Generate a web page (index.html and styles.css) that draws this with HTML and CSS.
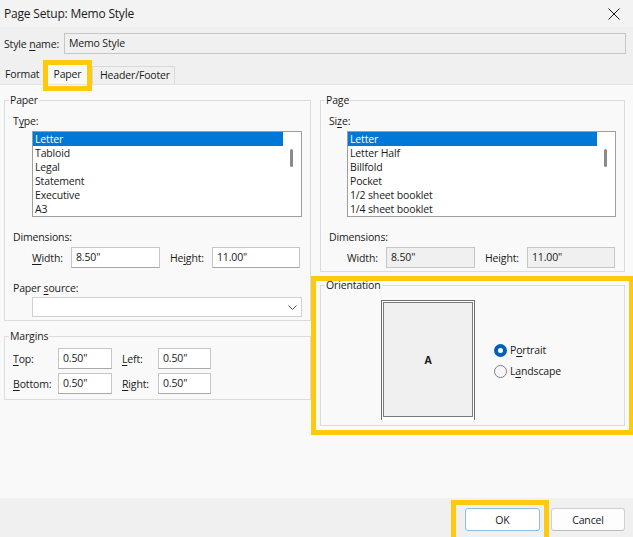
FILE: index.html
```html
<!DOCTYPE html>
<html lang="en">
<head>
    <meta charset="UTF-8">
    <title>Page Setup: Memo Style</title>
    <link rel="stylesheet" href="styles.css">
</head>
<body>

    <div class="titlebar">
        <span class="title">Page Setup: Memo Style</span>
        <svg class="close" width="12" height="12" viewBox="0 0 12 12">
            <path d="M0.5 0.5 L11.5 11.5 M11.5 0.5 L0.5 11.5" stroke="#1a1a1a" stroke-width="1" fill="none"/>
        </svg>
    </div>

    <div class="style-row">
        <label>Style <u>n</u>ame:</label>
        <div class="textbox readonly wide">Memo Style</div>
    </div>

    <div class="tabs">
        <div class="tab plain">Format</div>
        <div class="tab selected">Paper</div>
        <div class="tab framed">Header/Footer</div>
    </div>

    <div class="panel">
        <div class="column">
            <fieldset class="group">
                <legend>Paper</legend>
                <div class="field-label first">T<u>y</u>pe:</div>
                <div class="listbox">
                    <div class="item active">Letter</div>
                    <div class="item">Tabloid</div>
                    <div class="item">Legal</div>
                    <div class="item">Statement</div>
                    <div class="item">Executive</div>
                    <div class="item">A3</div>
                    <div class="thumb"></div>
                </div>
                <div class="field-label">Dimensions:</div>
                <div class="dims">
                    <label class="lbl-w"><u>W</u>idth:</label>
                    <div class="textbox w89">8.50"</div>
                    <label class="lbl-h">He<u>i</u>ght:</label>
                    <div class="textbox w88">11.00"</div>
                </div>
                <div class="field-label">Paper <u>s</u>ource:</div>
                <div class="combo">
                    <svg width="9" height="5" viewBox="0 0 9 5">
                        <path d="M0.5 0.5 L4.5 4.5 L8.5 0.5" stroke="#555" fill="none"/>
                    </svg>
                </div>
            </fieldset>

            <fieldset class="group margins">
                <legend>Margins</legend>
                <div class="margin-row">
                    <label class="lbl-a"><u>T</u>op:</label>
                    <div class="textbox w54">0.50"</div>
                    <label class="lbl-b"><u>L</u>eft:</label>
                    <div class="textbox w53">0.50"</div>
                </div>
                <div class="margin-row">
                    <label class="lbl-a"><u>B</u>ottom:</label>
                    <div class="textbox w54">0.50"</div>
                    <label class="lbl-b"><u>R</u>ight:</label>
                    <div class="textbox w53">0.50"</div>
                </div>
            </fieldset>
        </div>

        <div class="column">
            <fieldset class="group page">
                <legend>Page</legend>
                <div class="field-label first">Si<u>z</u>e:</div>
                <div class="listbox">
                    <div class="item active">Letter</div>
                    <div class="item">Letter Half</div>
                    <div class="item">Billfold</div>
                    <div class="item">Pocket</div>
                    <div class="item">1/2 sheet booklet</div>
                    <div class="item">1/4 sheet booklet</div>
                    <div class="thumb"></div>
                </div>
                <div class="field-label">Dimensions:</div>
                <div class="dims">
                    <label class="lbl-w">Width:</label>
                    <div class="textbox readonly w89">8.50"</div>
                    <label class="lbl-h">Height:</label>
                    <div class="textbox readonly w88">11.00"</div>
                </div>
            </fieldset>

            <fieldset class="group orientation">
                <legend>Orientation</legend>
                <div class="orient-body">
                    <div class="sheet">
                        <div class="sheet-inner">A</div>
                    </div>
                    <div class="radios">
                        <div class="radio checked"><span class="dot"></span>P<u>o</u>rtrait</div>
                        <div class="radio"><span class="dot"></span>L<u>a</u>ndscape</div>
                    </div>
                </div>
            </fieldset>
        </div>
    </div>

    <div class="footer">
        <button class="btn ok">OK</button>
        <button class="btn">Cancel</button>
    </div>

</body>
</html>
```

FILE: styles.css
```css
body {
    margin: 0;
    width: 633px;
    height: 537px;
    overflow: hidden;
    background-color: #f0f0f0;
    font-family: "Open Sans", "Noto Sans", sans-serif;
    font-size: 10.5px;
    letter-spacing: -0.15px;
    color: #1a1a1a;
}
u {
    text-decoration-thickness: 1px;
    text-underline-offset: 2px;
}

/* title bar */
.titlebar {
    height: 27px;
    display: flex;
    align-items: center;
    justify-content: space-between;
    padding: 0 13px 0 4px;
    background-color: #f3f3f3;
}
.title {
    font-size: 12px;
    letter-spacing: -0.2px;
}

/* style name */
.style-row {
    display: flex;
    align-items: center;
    height: 33px;
    padding-left: 4px;
}
.style-row label {
    width: 60px;
}

.textbox {
    box-sizing: border-box;
    height: 21px;
    padding: 1px 4px;
    background-color: #fff;
    border: 1px solid #c6c6c6;
    border-bottom-color: #a8a8a8;
    line-height: 16px;
}
.textbox.readonly {
    background-color: #f0f0f0;
    border-color: #c6c6c6;
}
.textbox.wide { width: 562px; }
.w89 { width: 89px; }
.w88 { width: 88px; }
.w54 { width: 54px; }
.w53 { width: 53px; }

/* tabs */
.tabs {
    display: flex;
    align-items: flex-end;
    height: 24px;
    padding-left: 1px;
}
.tab {
    box-sizing: border-box;
    height: 18px;
    padding: 0 4px;
    line-height: 17px;
}
.tab.plain {
    width: 42px;
}
.tab.selected {
    position: relative;
    width: 39px;
    height: 19px;
    margin: 0 5px;
    padding: 1px 0 0;
    text-align: center;
    background-color: #f9f9f9;
    z-index: 1;
}
.tab.selected::after {
    content: "";
    position: absolute;
    left: -5px;
    top: -5px;
    right: -5px;
    bottom: -7px;
    border: 5px solid #ffc90e;
}
.tab.framed {
    width: 83px;
    border: 1px solid #d9d9d9;
    border-bottom: none;
    padding: 0 7px;
}

/* main panel */
.panel {
    height: 414px;
    box-sizing: border-box;
    background-color: #f9f9f9;
    border-top: 1px solid #e3e3e3;
    display: grid;
    grid-template-columns: 307px 305px;
    column-gap: 9px;
    align-content: start;
    padding: 8px 0 0 4px;
}
.column {
    display: flex;
    flex-direction: column;
}

.group {
    margin: 0;
    padding: 0 8px 3px 8px;
    border: 1px solid #dcdcdc;
    min-width: 0;
}
.group legend {
    margin-left: -4px;
    padding: 0 1px;
    line-height: 14px;
}
.field-label {
    margin-top: 13px;
    line-height: 14px;
}
.field-label.first {
    margin-top: 7px;
}

.listbox {
    position: relative;
    box-sizing: border-box;
    height: 86px;
    margin: 3px 0 0 19px;
    border: 1px solid #9e9e9e;
    background-color: #fff;
    padding-right: 18px;
}
.page .listbox {
    margin-left: 18px;
}
.item {
    height: 14px;
    line-height: 14px;
    padding-left: 2px;
}
.item.active {
    background-color: #0078d7;
    color: #fff;
}
.thumb {
    position: absolute;
    right: 8px;
    top: 17px;
    width: 3px;
    height: 18px;
    border-radius: 2px;
    background-color: #8a8a8a;
}

.dims {
    display: flex;
    align-items: center;
    margin: 3px 0 0 19px;
}
.page .dims {
    margin-left: 18px;
}
.lbl-w { width: 39px; }
.lbl-h { width: 42px; margin-left: 10px; }

.combo {
    box-sizing: border-box;
    height: 20px;
    margin: 2px 0 0 19px;
    border: 1px solid #d0d0d0;
    background-color: #fff;
    display: flex;
    align-items: center;
    justify-content: flex-end;
    padding-right: 4px;
}

.margins {
    margin-top: 8px;
    padding-bottom: 5px;
}
.margin-row {
    display: flex;
    align-items: center;
    margin-top: 5px;
}
.margin-row + .margin-row {
    margin-top: 4px;
}
.lbl-a { width: 45px; }
.lbl-b { width: 36px; margin-left: 10px; }

/* orientation */
.orientation {
    position: relative;
    margin-top: 6px;
    padding-bottom: 5px;
}
.orientation::after {
    content: "";
    position: absolute;
    left: -10px;
    top: -16px;
    right: -10px;
    bottom: -10px;
    border: 5px solid #ffc90e;
    pointer-events: none;
}
.orient-body {
    display: flex;
    align-items: center;
    margin-top: 8px;
}
.sheet {
    box-sizing: border-box;
    width: 94px;
    height: 120px;
    margin-left: 52px;
    padding: 1px 1px 3px;
    border: 1px solid #6e6e6e;
    border-bottom: none;
    background-color: #fff;
    display: flex;
}
.sheet-inner {
    flex: 1;
    border: 1px solid #7a7a7a;
    background-color: #f0f0f0;
    display: flex;
    align-items: center;
    justify-content: center;
    font-weight: bold;
}
.radios {
    margin-left: 19px;
    display: flex;
    flex-direction: column;
    gap: 7px;
    padding-top: 1px;
}
.radio {
    display: flex;
    align-items: center;
    line-height: 14px;
}
.dot {
    box-sizing: border-box;
    width: 13px;
    height: 13px;
    margin-right: 3px;
    border-radius: 50%;
    border: 1px solid #808080;
    background-color: #f7f7f7;
}
.radio.checked .dot {
    border: 4px solid #005fb8;
    background-color: #fff;
}

/* buttons */
.footer {
    display: flex;
    justify-content: flex-end;
    gap: 11px;
    padding: 10px 8px 0 0;
}
.btn {
    box-sizing: border-box;
    width: 74px;
    height: 23px;
    font-family: inherit;
    font-size: 10.5px;
    letter-spacing: -0.15px;
    color: #1a1a1a;
    background-color: #fdfdfd;
    border: 1px solid #d0d0d0;
    border-bottom-color: #bcbcbc;
    border-radius: 3px;
}
.btn.ok {
    position: relative;
    width: 75px;
    border-color: #8cbbe8;
    background-color: #fff;
}
.btn.ok::after {
    content: "";
    position: absolute;
    left: -15px;
    top: -9px;
    right: -10px;
    bottom: -16px;
    border: 5px solid #ffc90e;
}
```
